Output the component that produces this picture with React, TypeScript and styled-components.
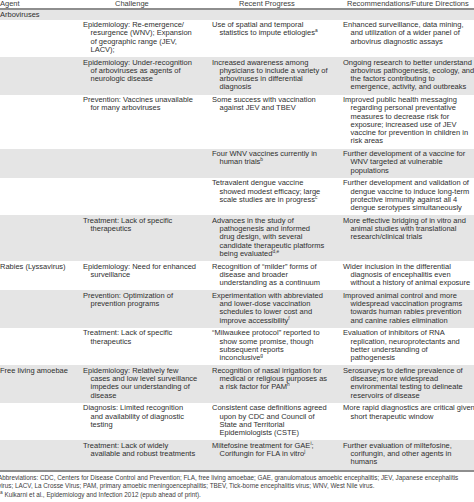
import React from "react"
import styled, { createGlobalStyle } from "styled-components"

const GlobalStyle = createGlobalStyle`
  html, body {
    margin: 0;
    padding: 0;
    background: #ffffff;
    overflow: hidden;
  }
  body {
    font-family: "Liberation Sans", Arial, sans-serif;
    color: #2f2f2f;
  }
`

const Page = styled.div`
  width: 474px;
  height: 502px;
  overflow: hidden;
`

const Table = styled.table`
  width: 482px;
  margin-left: -1px;
  border-collapse: collapse;
  table-layout: fixed;
  font-size: 7.5px;
  line-height: 8.25px;
  border-bottom: 2.5px solid #8e8e8e;
`

const HeadRow = styled.tr`
  height: 9.3px;
  border-bottom: 2.7px solid #8e8e8e;
`

const HeadCell = styled.th<{ $pad: number }>`
  padding: 0 0 0 ${({ $pad }) => $pad}px;
  text-align: left;
  font-weight: normal;
  vertical-align: top;
  white-space: nowrap;
  color: #404040;
  line-height: 8px;
`

const SectionCell = styled.td`
  background: #e5e5e5;
  padding: 0.5px 0 0.5px 1px;
  height: 8px;
  vertical-align: top;
`

const Row = styled.tr<{ $shaded: boolean }>`
  background: ${({ $shaded }) => ($shaded ? "#e5e5e5" : "#ffffff")};
`

const Cell = styled.td<{ $pad: number }>`
  padding: 1.5px 0 3px ${({ $pad }) => $pad}px;
  vertical-align: top;
`

const Line = styled.span<{ $hang: boolean }>`
  display: block;
  white-space: nowrap;
  padding-left: ${({ $hang }) => ($hang ? 7.5 : 0)}px;
`

const Sup = styled.sup`
  font-size: 4.8px;
  line-height: 0;
  vertical-align: 2.6px;
`

const Footnotes = styled.div`
  margin: 2px 0 0 -2px;
  font-size: 6.35px;
  line-height: 8.5px;
  color: #404040;
  white-space: nowrap;
`

const Reference = styled.div`
  padding-left: 2px;
`

type Text = React.ReactNode[]

interface TableRow {
  challenge?: Text
  progress?: Text
  rec?: Text
}

interface Group {
  agent: string
  rows: TableRow[]
}

const groups: Group[] = [
  {
    agent: "Arboviruses",
    rows: [
      {
        challenge: [
          "Epidemiology: Re-emergence/",
          "resurgence (WNV); Expansion",
          "of geographic range (JEV,",
          "LACV);",
        ],
        progress: [
          "Use of spatial and temporal",
          <>statistics to impute etiologies<Sup>a</Sup></>,
        ],
        rec: [
          "Enhanced surveillance, data mining,",
          "and utilization of a wider panel of",
          "arbovirus diagnostic assays",
        ],
      },
      {
        challenge: [
          "Epidemiology: Under-recognition",
          "of arboviruses as agents of",
          "neurologic disease",
        ],
        progress: [
          "Increased awareness among",
          "physicians to include a variety of",
          "arboviruses in differential",
          "diagnosis",
        ],
        rec: [
          "Ongoing research to better understand",
          "arbovirus pathogenesis, ecology, and",
          "the factors contributing to",
          "emergence, activity, and outbreaks",
        ],
      },
      {
        challenge: ["Prevention: Vaccines unavailable", "for many arboviruses"],
        progress: ["Some success with vaccination", "against JEV and TBEV"],
        rec: [
          "Improved public health messaging",
          "regarding personal preventative",
          "measures to decrease risk for",
          "exposure; increased use of JEV",
          "vaccine for prevention in children in",
          "risk areas",
        ],
      },
      {
        progress: [
          "Four WNV vaccines currently in",
          <>human trials<Sup>b</Sup></>,
        ],
        rec: [
          "Further development of a vaccine for",
          "WNV targeted at vulnerable",
          "populations",
        ],
      },
      {
        progress: [
          "Tetravalent dengue vaccine",
          "showed modest efficacy; large",
          <>scale studies are in progress<Sup>c</Sup></>,
        ],
        rec: [
          "Further development and validation of",
          "dengue vaccine to induce long-term",
          "protective immunity against all 4",
          "dengue serotypes simultaneously",
        ],
      },
      {
        challenge: ["Treatment: Lack of specific", "therapeutics"],
        progress: [
          "Advances in the study of",
          "pathogenesis and informed",
          "drug design, with several",
          "candidate therapeutic platforms",
          <>being evaluated<Sup>d,e</Sup></>,
        ],
        rec: [
          "More effective bridging of in vitro and",
          "animal studies with translational",
          "research/clinical trials",
        ],
      },
    ],
  },
  {
    agent: "Rabies (Lyssavirus)",
    rows: [
      {
        challenge: ["Epidemiology: Need for enhanced", "surveillance"],
        progress: [
          "Recognition of \u201cmilder\u201d forms of",
          "disease and broader",
          "understanding as a continuum",
        ],
        rec: [
          "Wider inclusion in the differential",
          "diagnosis of encephalitis even",
          "without a history of animal exposure",
        ],
      },
      {
        challenge: ["Prevention: Optimization of", "prevention programs"],
        progress: [
          "Experimentation with abbreviated",
          "and lower-dose vaccination",
          "schedules to lower cost and",
          <>improve accessibility<Sup>f</Sup></>,
        ],
        rec: [
          "Improved animal control and more",
          "widespread vaccination programs",
          "towards human rabies prevention",
          "and canine rabies elimination",
        ],
      },
      {
        challenge: ["Treatment: Lack of specific", "therapeutics"],
        progress: [
          "\u201cMilwaukee protocol\u201d reported to",
          "show some promise, though",
          "subsequent reports",
          <>inconclusive<Sup>g</Sup></>,
        ],
        rec: [
          "Evaluation of inhibitors of RNA",
          "replication, neuroprotectants and",
          "better understanding of",
          "pathogenesis",
        ],
      },
    ],
  },
  {
    agent: "Free living amoebae",
    rows: [
      {
        challenge: [
          "Epidemiology: Relatively few",
          "cases and low level surveillance",
          "impedes our understanding of",
          "disease",
        ],
        progress: [
          "Recognition of nasal irrigation for",
          "medical or religious purposes as",
          <>a risk factor for PAM<Sup>h</Sup></>,
        ],
        rec: [
          "Serosurveys to define prevalence of",
          "disease; more widespread",
          "environmental testing to delineate",
          "reservoirs of disease",
        ],
      },
      {
        challenge: [
          "Diagnosis: Limited recognition",
          "and availability of diagnostic",
          "testing",
        ],
        progress: [
          "Consistent case definitions agreed",
          "upon by CDC and Council of",
          "State and Territorial",
          "Epidemiologists (CSTE)",
        ],
        rec: [
          "More rapid diagnostics are critical given",
          "short therapeutic window",
        ],
      },
      {
        challenge: ["Treatment: Lack of widely", "available and robust treatments"],
        progress: [
          <>Miltefosine treatment for GAE<Sup>i</Sup>;</>,
          <>Corifungin for FLA in vitro<Sup>j</Sup></>,
        ],
        rec: [
          "Further evaluation of miltefosine,",
          "corifungin, and other agents in",
          "humans",
        ],
      },
    ],
  },
]

const CellText: React.FC<{ lines?: Text }> = ({ lines }) => (
  <>
    {lines?.map((line, i) => (
      <Line key={i} $hang={i > 0}>
        {line}
      </Line>
    ))}
  </>
)

export default function App() {
  let rowIndex = 0

  return (
    <Page>
      <GlobalStyle />
      <Table>
        <colgroup>
          <col style={{ width: 82 }} />
          <col style={{ width: 129 }} />
          <col style={{ width: 131 }} />
          <col style={{ width: 140 }} />
        </colgroup>
        <thead>
          <HeadRow>
            <HeadCell $pad={1}>Agent</HeadCell>
            <HeadCell $pad={34}>Challenge</HeadCell>
            <HeadCell $pad={29}>Recent Progress</HeadCell>
            <HeadCell $pad={6}>Recommendations/Future Directions</HeadCell>
          </HeadRow>
        </thead>
        <tbody>
          {groups.map((group, g) => (
            <React.Fragment key={group.agent}>
              {g === 0 && (
                <tr>
                  <SectionCell colSpan={4}>{group.agent}</SectionCell>
                </tr>
              )}
              {group.rows.map((row, r) => {
                const shaded = rowIndex % 2 === 1
                rowIndex++
                return (
                  <Row key={r} $shaded={shaded}>
                    <Cell $pad={1}>{g > 0 && r === 0 ? group.agent : null}</Cell>
                    <Cell $pad={2}>
                      <CellText lines={row.challenge} />
                    </Cell>
                    <Cell $pad={2}>
                      <CellText lines={row.progress} />
                    </Cell>
                    <Cell $pad={2}>
                      <CellText lines={row.rec} />
                    </Cell>
                  </Row>
                )
              })}
            </React.Fragment>
          ))}
        </tbody>
      </Table>
      <Footnotes>
        <div>
          Abbreviations: CDC, Centers for Disease Control and Prevention; FLA,
          free living amoebae; GAE, granulomatous amoebic encephalitis; JEV,
          Japanese encephalitis
        </div>
        <div>
          virus; LACV, La Crosse Virus; PAM, primary amoebic
          meningoencephalitis; TBEV, Tick-borne encephalitis virus; WNV, West
          Nile virus.
        </div>
        <Reference>
          <Sup>a</Sup> Kulkarni et al., Epidemiology and Infection 2012 (epub
          ahead of print).
        </Reference>
      </Footnotes>
    </Page>
  )
}
